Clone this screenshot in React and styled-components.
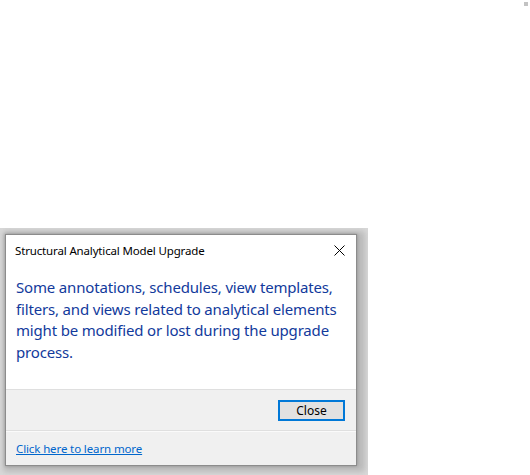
import React from "react";
import styled, { createGlobalStyle } from "styled-components";

const Global = createGlobalStyle`
  html, body { margin: 0; padding: 0; background: #ffffff; }
  body { font-family: "Segoe UI", "Noto Sans", "Open Sans", sans-serif; }
`;

const Page = styled.div`
  width: 530px;
  height: 475px;
  display: flex;
  flex-direction: column;
  overflow: hidden;
`;

const TopRow = styled.div`
  height: 228px;
  display: flex;
  justify-content: flex-end;
  align-items: flex-start;
`;

const Speck = styled.div`
  width: 4px;
  height: 4px;
  margin: 2px 2px 0 0;
  background: #b4b4b4;
  opacity: 0.8;
`;

const ShadowFrame = styled.div`
  width: 368px;
  height: 247px;
  box-sizing: border-box;
  padding: 6px 11px 9px 5px;
  background: #b9b9b9;
  box-shadow: inset 0 0 6px 3px rgba(230, 230, 230, 0.75);
  display: flex;
`;

const Dialog = styled.div`
  flex: 1;
  display: flex;
  flex-direction: column;
  background: #f0f0f0;
  border: 1px solid #8c8c8c;
  box-shadow: 0 0 3px rgba(0, 0, 0, 0.25);
`;

const Upper = styled.div`
  background: #ffffff;
  height: 154px;
  display: flex;
  flex-direction: column;
  border-bottom: 1px solid #dfdfdf;
`;

const TitleBar = styled.div`
  height: 30px;
  display: flex;
  align-items: center;
  justify-content: space-between;
  padding: 0 9px 0 9px;
`;

const Title = styled.span`
  font-size: 11.5px;
  color: #000000;
  letter-spacing: -0.15px;
`;

const CloseX = styled.svg`
  width: 11px;
  height: 11px;
  margin-right: 2px;
`;

const Message = styled.div`
  padding: 12px 10px 0 10px;
  font-size: 15px;
  line-height: 21.67px;
  letter-spacing: -0.17px;
  color: #123a9c;
  white-space: nowrap;
`;

const ButtonBar = styled.div`
  height: 40px;
  display: flex;
  justify-content: flex-end;
  align-items: center;
  padding: 0 11px;
  border-bottom: 1px solid #dfdfdf;
  box-shadow: 0 1px 0 #fafafa;
`;

const Button = styled.button`
  width: 67px;
  height: 21px;
  box-sizing: border-box;
  background: #e1e1e1;
  border: 2px solid #0078d7;
  font-family: inherit;
  font-size: 12px;
  color: #000000;
  padding: 0;
  display: flex;
  align-items: center;
  justify-content: center;
`;

const Footer = styled.div`
  flex: 1;
  display: flex;
  align-items: center;
  padding: 0 10px;
`;

const Link = styled.a`
  font-size: 11.5px;
  letter-spacing: -0.12px;
  color: #0066cc;
  text-decoration: underline;
  cursor: pointer;
`;

export default function App() {
  const lines = [
    "Some annotations, schedules, view templates,",
    "filters, and views related to analytical elements",
    "might be modified or lost during the upgrade",
    "process.",
  ];
  return (
    <>
      <Global />
      <Page>
        <TopRow>
          <Speck />
        </TopRow>
        <ShadowFrame>
          <Dialog>
            <Upper>
              <TitleBar>
                <Title>Structural Analytical Model Upgrade</Title>
                <CloseX viewBox="0 0 11 11">
                  <path d="M0.5 0.5 L10.5 10.5 M10.5 0.5 L0.5 10.5" stroke="#000" strokeWidth="1" fill="none" />
                </CloseX>
              </TitleBar>
              <Message>
                {lines.map((l, i) => (
                  <div key={i}>{l}</div>
                ))}
              </Message>
            </Upper>
            <ButtonBar>
              <Button>Close</Button>
            </ButtonBar>
            <Footer>
              <Link>Click here to learn more</Link>
            </Footer>
          </Dialog>
        </ShadowFrame>
      </Page>
    </>
  );
}
